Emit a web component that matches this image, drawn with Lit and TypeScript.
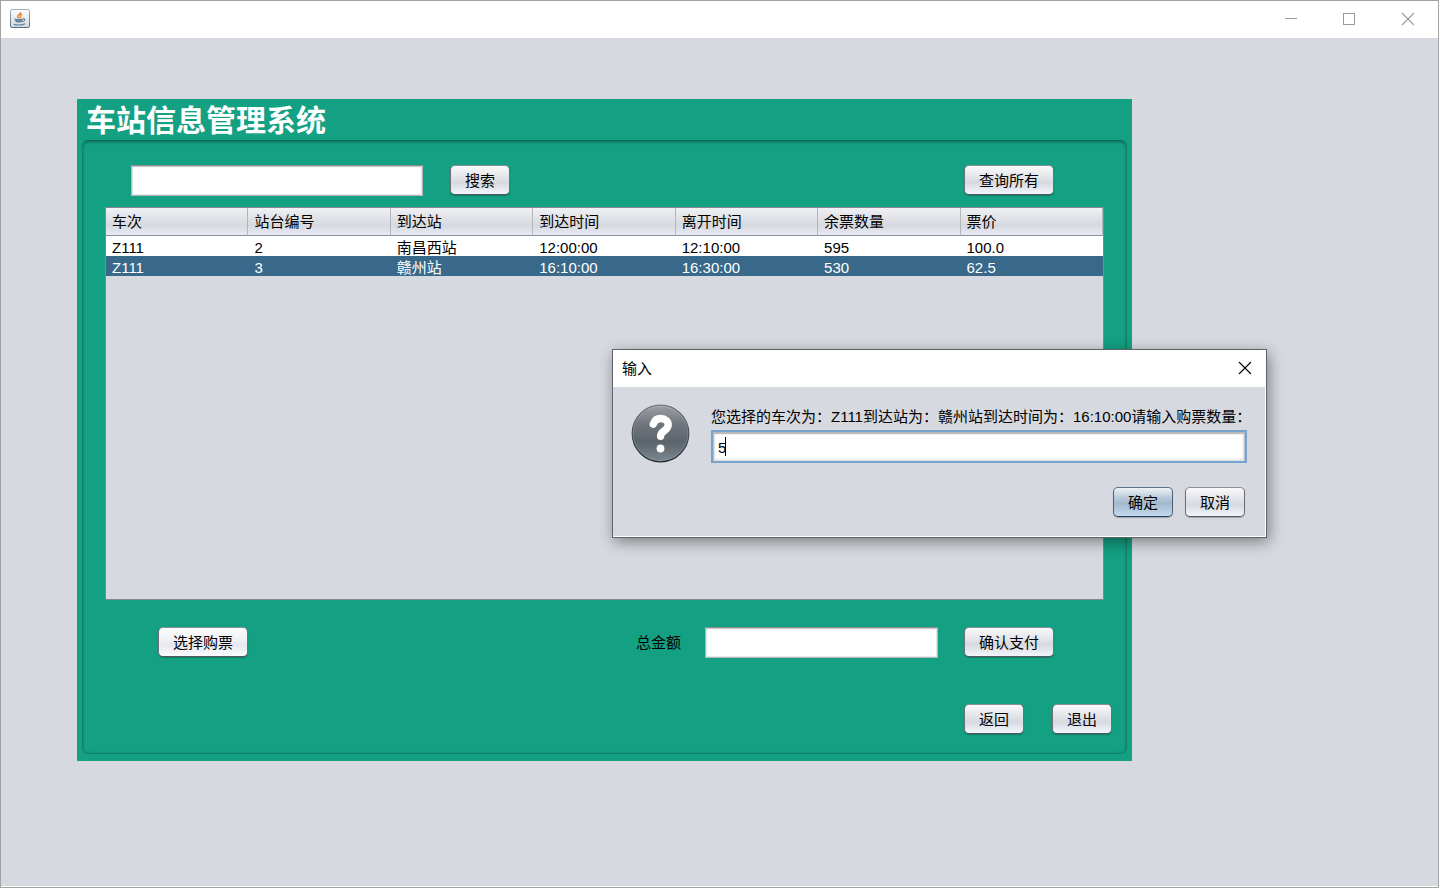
import { LitElement, html, css, svg } from "lit";
import { customElement, property, state } from "lit/decorators.js";

interface Train {
  cells: string[];
}

const HEADERS = ["车次", "站台编号", "到达站", "到达时间", "离开时间", "余票数量", "票价"];
const TRAINS: Train[] = [
  { cells: ["Z111", "2", "南昌西站", "12:00:00", "12:10:00", "595", "100.0"] },
  { cells: ["Z111", "3", "赣州站", "16:10:00", "16:30:00", "530", "62.5"] },
];

const javaIcon = svg`
  <svg width="20" height="20" viewBox="0 0 20 20" aria-hidden="true">
    <defs>
      <linearGradient id="tile" x1="0" y1="0" x2="0" y2="1">
        <stop offset="0" stop-color="#fdfdfe" />
        <stop offset="1" stop-color="#d3d8de" />
      </linearGradient>
      <linearGradient id="edge" x1="0" y1="0" x2="0" y2="1">
        <stop offset="0" stop-color="#a4b0ba" />
        <stop offset="1" stop-color="#54708a" />
      </linearGradient>
    </defs>
    <rect x="0.5" y="0.5" width="19" height="18" rx="1.5" fill="url(#tile)" stroke="url(#edge)" />
    <path d="M10.6 3c.8 2-3.8 2.8-3 4.8.3.7.9 1 1.3 1.4M12.2 5.2c-1.6.6-2.6 1.4-1.9 2.4.4.6.2 1.1-.3 1.6" fill="none" stroke="#e8873a" stroke-width="1.5" />
    <path d="M4.5 10c2.5.7 6 .6 8.5 0l-1.5 3.2q-2.7.9-5.4 0z" fill="#7b95ac" />
    <path d="M4.5 10c2.5.7 6 .6 8.5 0M13 9.8c2.6-.5 2.5 2.1-.8 2.8M3.5 15.2c2.8 1.2 8.8 1.1 11.5-.4M5.5 11.9c2 .6 4.8.6 6.7 0" fill="none" stroke="#5f7f9c" stroke-width="1.1" />
  </svg>`;

const questionIcon = svg`
  <svg width="60" height="60" viewBox="0 0 60 60" aria-hidden="true">
    <defs>
      <linearGradient id="disc" x1="0" y1="0" x2="0" y2="1">
        <stop offset="0" stop-color="#9c9fa5" />
        <stop offset="0.35" stop-color="#6f757c" />
        <stop offset="0.65" stop-color="#5c646b" />
        <stop offset="1" stop-color="#7c8892" />
      </linearGradient>
      <linearGradient id="rim" x1="0" y1="0" x2="0" y2="1">
        <stop offset="0" stop-color="#75787d" />
        <stop offset="1" stop-color="#20272e" />
      </linearGradient>
    </defs>
    <circle cx="29.5" cy="29.5" r="28.3" fill="url(#disc)" stroke="url(#rim)" stroke-width="1.2" />
    <circle cx="29.5" cy="29.5" r="27.2" fill="none" stroke="#fff" stroke-opacity="0.15" />
    <path d="M22.3 20.2C23.5 16.3 26.2 14.5 29.7 14.5c4.5 0 7.5 2.5 7.5 6.3 0 3-1.9 4.6-4.2 6.2-2.3 1.7-3.4 2.9-3.4 5.2" fill="none" stroke="#fff" stroke-width="7.4" stroke-linecap="round" stroke-linejoin="round" />
    <circle cx="29.5" cy="44.5" r="3.9" fill="#fff" />
  </svg>`;

const base = css`
  * {
    box-sizing: border-box;
  }
  button,
  input {
    font: inherit;
    color: #000;
    margin: 0;
  }
  .btn {
    height: 30px;
    padding: 2px 14px 0;
    border: 1px solid;
    border-color: #8d9096 #6d7177 #55595f;
    border-radius: 5px;
    background: linear-gradient(#fafafb, #e3e4e9 40%, #d6d9df 60%, #f2f5fb);
    line-height: 26px;
    white-space: nowrap;
    box-shadow: 0 1px 1px rgba(0, 0, 0, 0.25);
  }
  .field {
    height: 31px;
    padding: 0 5px;
    border: 1px solid #b4b8be;
    border-top-color: #8d8e8f;
    border-radius: 0;
    background: #fff;
    box-shadow: inset 0 1px 1px #c6c6c6, inset 0 0 1px 1px #e4e5e7;
    outline: none;
    min-width: 0;
  }
`;

@customElement("ticket-dialog")
export class TicketDialog extends LitElement {
  @property() message = "";
  @property() value = "";

  static styles = [
    base,
    css`
      :host {
        display: block;
        border: 1px solid #5f6266;
        background: #fff;
        box-shadow: 2px 4px 14px rgba(0, 0, 0, 0.42);
      }
      .bar {
        display: flex;
        align-items: center;
        justify-content: space-between;
        height: 37px;
        padding: 0 14px 0 9px;
      }
      .close {
        display: flex;
        padding: 0 0 2px;
        border: 0;
        background: none;
      }
      .body {
        display: grid;
        grid-template-columns: 60px minmax(0, 1fr);
        column-gap: 20px;
        margin: 0 1px 1px 0;
        padding: 17px 18px 19px;
        background: #d6d9df;
      }
      .form {
        display: flex;
        flex-direction: column;
      }
      .message {
        height: 26px;
        line-height: 26px;
        white-space: nowrap;
      }
      .entry {
        height: 33px;
        padding-top: 2px;
        border: 2px solid #78a3cf;
        box-shadow: inset 0 1px 1px 1px #b9babd, inset 0 0 2px 2px #e4e5e7;
      }
      .caretbox {
        position: relative;
        display: grid;
      }
      .caret {
        position: absolute;
        left: 14px;
        top: 7px;
        width: 1px;
        height: 19px;
        background: #000;
      }
      .actions {
        display: flex;
        justify-content: flex-end;
        gap: 12px;
        padding: 24px 2px 0 0;
      }
      .primary {
        border-color: #5d7287 #4d637a #2c4158;
        background: linear-gradient(#eef2f6, #b9c9d8 35%, #a3b8cc 55%, #c3daf0);
      }
    `,
  ];

  render() {
    return html`
      <div class="bar">
        <span>输入</span>
        <button class="close" aria-label="关闭">
          <svg width="14" height="14" viewBox="0 0 14 14">
            <path d="M1 1l12 12M13 1L1 13" stroke="#000" stroke-width="1.1" />
          </svg>
        </button>
      </div>
      <div class="body">
        ${questionIcon}
        <div class="form">
          <label class="message" for="count">${this.message}</label>
          <div class="caretbox">
            <input class="field entry" id="count" .value=${this.value} />
            <span class="caret"></span>
          </div>
          <div class="actions">
            <button class="btn primary">确定</button>
            <button class="btn">取消</button>
          </div>
        </div>
      </div>
    `;
  }
}

@customElement("app-root")
export class AppRoot extends LitElement {
  @state() private selected = 1;

  static styles = [
    base,
    css`
      :host {
        display: flex;
        flex-direction: column;
        box-sizing: border-box;
        min-height: 100vh;
        position: relative;
        border: 1px solid #a3a3a3;
        background: #d6d9df;
        color: #000;
        font: 15px/20px "Liberation Sans", "Noto Sans CJK SC", sans-serif;
      }
      .titlebar {
        display: flex;
        align-items: center;
        justify-content: space-between;
        height: 37px;
        padding: 0 24px 2px 9px;
        background: #fff;
      }
      .logo,
      .winbtn {
        display: flex;
      }
      .controls {
        display: flex;
        gap: 44px;
      }
      .winbtn {
        padding: 0;
        border: 0;
        background: none;
      }
      .content {
        flex: 1;
        padding: 61px 306px 0 76px;
        border-bottom: 1px solid #fff;
      }
      .panel {
        padding: 0 5px 7px;
        background: #14a083;
      }
      .heading {
        margin: 0;
        padding: 0 4px;
        height: 41px;
        font: bold 30px/44px "Liberation Sans", "Noto Sans CJK SC", sans-serif;
        color: #fff;
      }
      .frame {
        padding: 24px 14px 19px 22px;
        border: 1px solid #108069;
        border-top-color: #0e6a57;
        border-radius: 6px;
        box-shadow: inset 0 2px 2px #108069, inset 0 0 3px #118a71;
      }
      .search,
      .purchase,
      .nav {
        display: flex;
        align-items: flex-start;
      }
      .search {
        gap: 27px;
        padding: 0 58px 0 26px;
      }
      .query {
        flex: 0 1 292px;
      }
      .push {
        margin-left: auto;
      }
      .scroll {
        height: 393px;
        margin: 11px 8px 0 0;
        border: 1px solid #84888e;
        background: #d6d9df;
      }
      .grid {
        width: 100%;
        border-collapse: separate;
        border-spacing: 0;
        table-layout: fixed;
      }
      .grid th {
        height: 28px;
        padding: 1px 6px 0;
        border-right: 1px solid #b2b5bb;
        border-bottom: 1px solid #8a8f9b;
        background: linear-gradient(#f0f1f4, #dfe1e6 40%, #d6d9df 65%, #e8ebf5);
        font-weight: normal;
        text-align: left;
      }
      .grid td {
        height: 20px;
        padding: 3px 6px 0;
        background: #fff;
        line-height: 17px;
      }
      .grid .chosen td {
        background: #39698a;
        color: #fff;
      }
      .purchase {
        padding: 27px 58px 0 53px;
      }
      .pick {
        background: linear-gradient(#fcfcfd, #eff0f4 45%, #e5e8ee 60%, #fbfcff);
      }
      .total {
        margin: 0 24px 0 auto;
        line-height: 31px;
      }
      .amount {
        flex: 0 1 233px;
        margin-right: 26px;
      }
      .nav {
        justify-content: flex-end;
        gap: 28px;
        padding-top: 46px;
      }
      .dialog {
        position: absolute;
        left: 611px;
        top: 348px;
        width: 655px;
      }
    `,
  ];

  render() {
    return html`
      <header class="titlebar">
        <span class="logo">${javaIcon}</span>
        <div class="controls">
          <button class="winbtn" aria-label="最小化">
            <svg width="14" height="14" viewBox="0 0 14 14"><path d="M1 6.5h12" stroke="#999" /></svg>
          </button>
          <button class="winbtn" aria-label="最大化">
            <svg width="14" height="14" viewBox="0 0 14 14">
              <rect x="1.5" y="1.5" width="11" height="11" fill="none" stroke="#999" />
            </svg>
          </button>
          <button class="winbtn" aria-label="关闭">
            <svg width="14" height="14" viewBox="0 0 14 14">
              <path d="M2 1l12 12M14 1L2 13" stroke="#999" stroke-width="1.1" />
            </svg>
          </button>
        </div>
      </header>
      <main class="content">
        <section class="panel">
          <h1 class="heading">车站信息管理系统</h1>
          <div class="frame">
            <div class="search">
              <input class="field query" aria-label="搜索" />
              <button class="btn">搜索</button>
              <button class="btn push">查询所有</button>
            </div>
            <div class="scroll">
              <table class="grid">
                <thead>
                  <tr>${HEADERS.map((h) => html`<th scope="col">${h}</th>`)}</tr>
                </thead>
                <tbody>
                  ${TRAINS.map(
                    (train, i) => html`
                      <tr class=${i === this.selected ? "chosen" : ""} @click=${() => (this.selected = i)}>
                        ${train.cells.map((c) => html`<td>${c}</td>`)}
                      </tr>
                    `
                  )}
                </tbody>
              </table>
            </div>
            <div class="purchase">
              <button class="btn pick">选择购票</button>
              <label class="total" for="amount">总金额</label>
              <input class="field amount" id="amount" />
              <button class="btn">确认支付</button>
            </div>
            <div class="nav">
              <button class="btn">返回</button>
              <button class="btn">退出</button>
            </div>
          </div>
        </section>
      </main>
      <ticket-dialog
        class="dialog"
        role="dialog"
        message="您选择的车次为：Z111到达站为：赣州站到达时间为：16:10:00请输入购票数量："
        value="5"
      ></ticket-dialog>
    `;
  }
}
